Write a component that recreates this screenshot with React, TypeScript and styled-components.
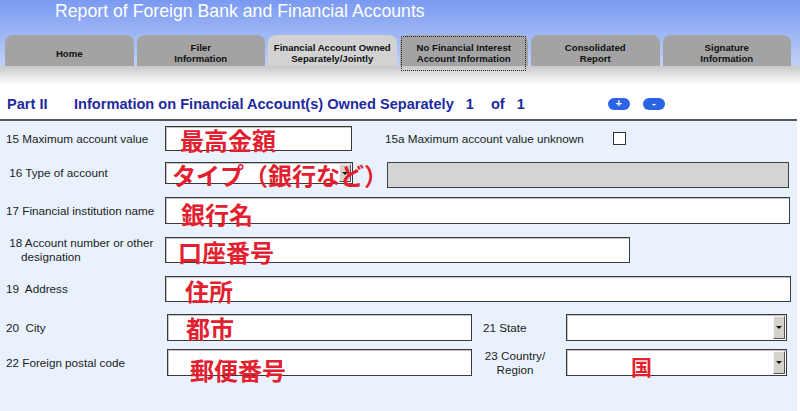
import React from "react"
import styled, { createGlobalStyle, css } from "styled-components"

const GlobalStyle = createGlobalStyle`
  body {
    margin: 0;
    background: #fff;
    font-family: "Liberation Sans", Arial, sans-serif;
  }
`

const Page = styled.div`
  width: 800px;
  height: 411px;
  overflow: hidden;
`

const Header = styled.header`
  height: 66px;
  background: linear-gradient(#7a9af2, #98b2f4 45%, #c2d2f6);
`

const Title = styled.h1`
  margin: 0;
  height: 35px;
  box-sizing: border-box;
  padding: 1px 0 0 55px;
  font-size: 17.7px;
  font-weight: normal;
  line-height: 21px;
  color: #fff;
`

const Tabs = styled.nav`
  display: flex;
  gap: 3px;
  padding-left: 5px;
  height: 31px;
`

interface TabProps {
  $active?: boolean
  $focused?: boolean
}

const Tab = styled.div<TabProps>`
  position: relative;
  width: 128.5px;
  height: 31px;
  box-sizing: border-box;
  padding-top: 5px;
  border-radius: 8px 8px 0 0;
  background: ${(p) => (p.$active ? "#d2d2d2" : "#a3a3a3")};
  display: flex;
  align-items: center;
  justify-content: center;
  text-align: center;
  font-size: 9.6px;
  font-weight: bold;
  line-height: 11px;
  color: #111;
  ${(p) =>
    p.$focused &&
    css`
      &::after {
        content: "";
        position: absolute;
        left: 1px;
        right: 2px;
        top: 1px;
        bottom: -5px;
        border: 1px dotted #222;
      }
    `}
`

const Shade = styled.div`
  height: 19px;
  background: linear-gradient(#c8c8c8, #efefef 70%, #fff);
`

const PartHeading = styled.div`
  width: 797px;
  height: 36px;
  box-sizing: border-box;
  padding: 4px 0 0 7px;
  display: flex;
  align-items: center;
  border-bottom: 2px solid #56575a;
  color: #1e2a9f;
  font-size: 14.6px;
  font-weight: bold;
`

const PartNo = styled.span`
  width: 67px;
`

const Spaced = styled.span<{ $ml: number }>`
  margin-left: ${(p) => p.$ml}px;
`

const RoundButton = styled.span<{ $ml: number }>`
  margin-left: ${(p) => p.$ml}px;
  width: 22px;
  height: 12px;
  border-radius: 6px;
  background: #2c63e6;
  color: #fff;
  font-size: 11px;
  line-height: 11px;
  text-align: center;
`

const Form = styled.section`
  width: 797px;
  height: 290px;
  box-sizing: border-box;
  padding: 5px 0 0 6px;
  background: #e9f2fc;
`

const Row = styled.div<{ $h: number; $mt: number }>`
  display: flex;
  align-items: center;
  height: ${(p) => p.$h}px;
  margin-top: ${(p) => p.$mt}px;
`

const Label = styled.div<{ $w?: number }>`
  width: ${(p) => p.$w ?? 159}px;
  flex-shrink: 0;
  font-size: 11.7px;
  line-height: 14px;
  color: #1c1c1c;
`

const Indent = styled.span`
  display: block;
  padding-left: 15px;
`

const SideLabel = styled.div<{ $center?: boolean }>`
  width: 83px;
  margin-left: 11px;
  box-sizing: border-box;
  font-size: 11.7px;
  line-height: 14px;
  color: #1c1c1c;
  ${(p) =>
    p.$center &&
    css`
      padding-right: 19px;
      text-align: center;
    `}
`

const Box = styled.div<{ $w: number }>`
  position: relative;
  width: ${(p) => p.$w}px;
  height: 100%;
  box-sizing: border-box;
  flex-shrink: 0;
  display: flex;
  align-self: flex-start;
  background: #fff;
  border: 1px solid #3a3a3a;
  box-shadow: inset 1px 1px 0 #c4c4c4;
`

const DropButton = styled.span`
  margin: 1px 1px 1px auto;
  width: 12px;
  box-sizing: border-box;
  background: #d5d2cc;
  border: 1px solid;
  border-color: #f4f4f4 #555 #555 #f4f4f4;
  display: flex;
  align-items: center;
  justify-content: center;

  &::before {
    content: "";
    border-left: 3px solid transparent;
    border-right: 3px solid transparent;
    border-top: 3px solid #111;
  }
`

interface NoteProps {
  $x: number
  $dy: number
  $size?: number
}

const Note = styled.span<NoteProps>`
  position: absolute;
  z-index: 1;
  left: ${(p) => p.$x}px;
  top: 50%;
  transform: translateY(calc(-50% + ${(p) => p.$dy}px));
  white-space: nowrap;
  color: #e2202f;
  font-family: "Noto Sans CJK JP", "Noto Sans CJK SC", sans-serif;
  font-size: ${(p) => p.$size ?? 24}px;
  font-weight: bold;
  line-height: 1;
`

const UnknownLabel = styled.span`
  margin-left: 33px;
  width: 228px;
  font-size: 11.7px;
  color: #1c1c1c;
`

const Check = styled.span`
  width: 13px;
  height: 13px;
  box-sizing: border-box;
  background: #fff;
  border: 1px solid #333;
`

const Disabled = styled.div`
  align-self: flex-start;
  margin-left: 34px;
  width: 402px;
  height: 26px;
  box-sizing: border-box;
  background: #d4d4d4;
  border: 1px solid #3f3f3f;
`

const tabs = [
  ["Home"],
  ["Filer", "Information"],
  ["Financial Account Owned", "Separately/Jointly"],
  ["No Financial Interest", "Account Information"],
  ["Consolidated", "Report"],
  ["Signature", "Information"],
]

export default function App() {
  return (
    <Page>
      <GlobalStyle />
      <Header>
        <Title>Report of Foreign Bank and Financial Accounts</Title>
        <Tabs>
          {tabs.map((lines, i) => (
            <Tab key={i} $active={i === 2} $focused={i === 3}>
              <div>
                {lines.map((l) => (
                  <div key={l}>{l}</div>
                ))}
              </div>
            </Tab>
          ))}
        </Tabs>
      </Header>
      <Shade />
      <PartHeading>
        <PartNo>Part II</PartNo>
        <span>Information on Financial Account(s) Owned Separately</span>
        <Spaced $ml={12}>1</Spaced>
        <Spaced $ml={17}>of</Spaced>
        <Spaced $ml={12}>1</Spaced>
        <RoundButton $ml={83}>+</RoundButton>
        <RoundButton $ml={13}>-</RoundButton>
      </PartHeading>
      <Form>
        <Row $h={25} $mt={0}>
          <Label>15 Maximum account value</Label>
          <Box $w={187}>
            <Note $x={14} $dy={1}>最高金額</Note>
          </Box>
          <UnknownLabel>15a Maximum account value unknown</UnknownLabel>
          <Check />
        </Row>
        <Row $h={22} $mt={11}>
          <Label>&nbsp;16 Type of account</Label>
          <Box $w={188}>
            <Note $x={6} $dy={2}>タイプ（銀行など）</Note>
            <DropButton />
          </Box>
          <Disabled />
        </Row>
        <Row $h={27} $mt={13}>
          <Label>17 Financial institution name</Label>
          <Box $w={625}>
            <Note $x={15} $dy={3}>銀行名</Note>
          </Box>
        </Row>
        <Row $h={26} $mt={13}>
          <Label>
            &nbsp;18 Account number or other
            <Indent>designation</Indent>
          </Label>
          <Box $w={465}>
            <Note $x={12} $dy={2}>口座番号</Note>
          </Box>
        </Row>
        <Row $h={26} $mt={13}>
          <Label>19&nbsp; Address</Label>
          <Box $w={626}>
            <Note $x={19} $dy={2}>住所</Note>
          </Box>
        </Row>
        <Row $h={27} $mt={12}>
          <Label $w={161}>20&nbsp; City</Label>
          <Box $w={305}>
            <Note $x={18} $dy={0}>都市</Note>
          </Box>
          <SideLabel>21 State</SideLabel>
          <Box $w={221}>
            <DropButton />
          </Box>
        </Row>
        <Row $h={27} $mt={8}>
          <Label $w={161}>22 Foreign postal code</Label>
          <Box $w={305}>
            <Note $x={22} $dy={7}>郵便番号</Note>
          </Box>
          <SideLabel $center>
            23 Country/
            <br />
            Region
          </SideLabel>
          <Box $w={221}>
            <Note $x={64} $dy={3} $size={21}>国</Note>
            <DropButton />
          </Box>
        </Row>
      </Form>
    </Page>
  )
}
